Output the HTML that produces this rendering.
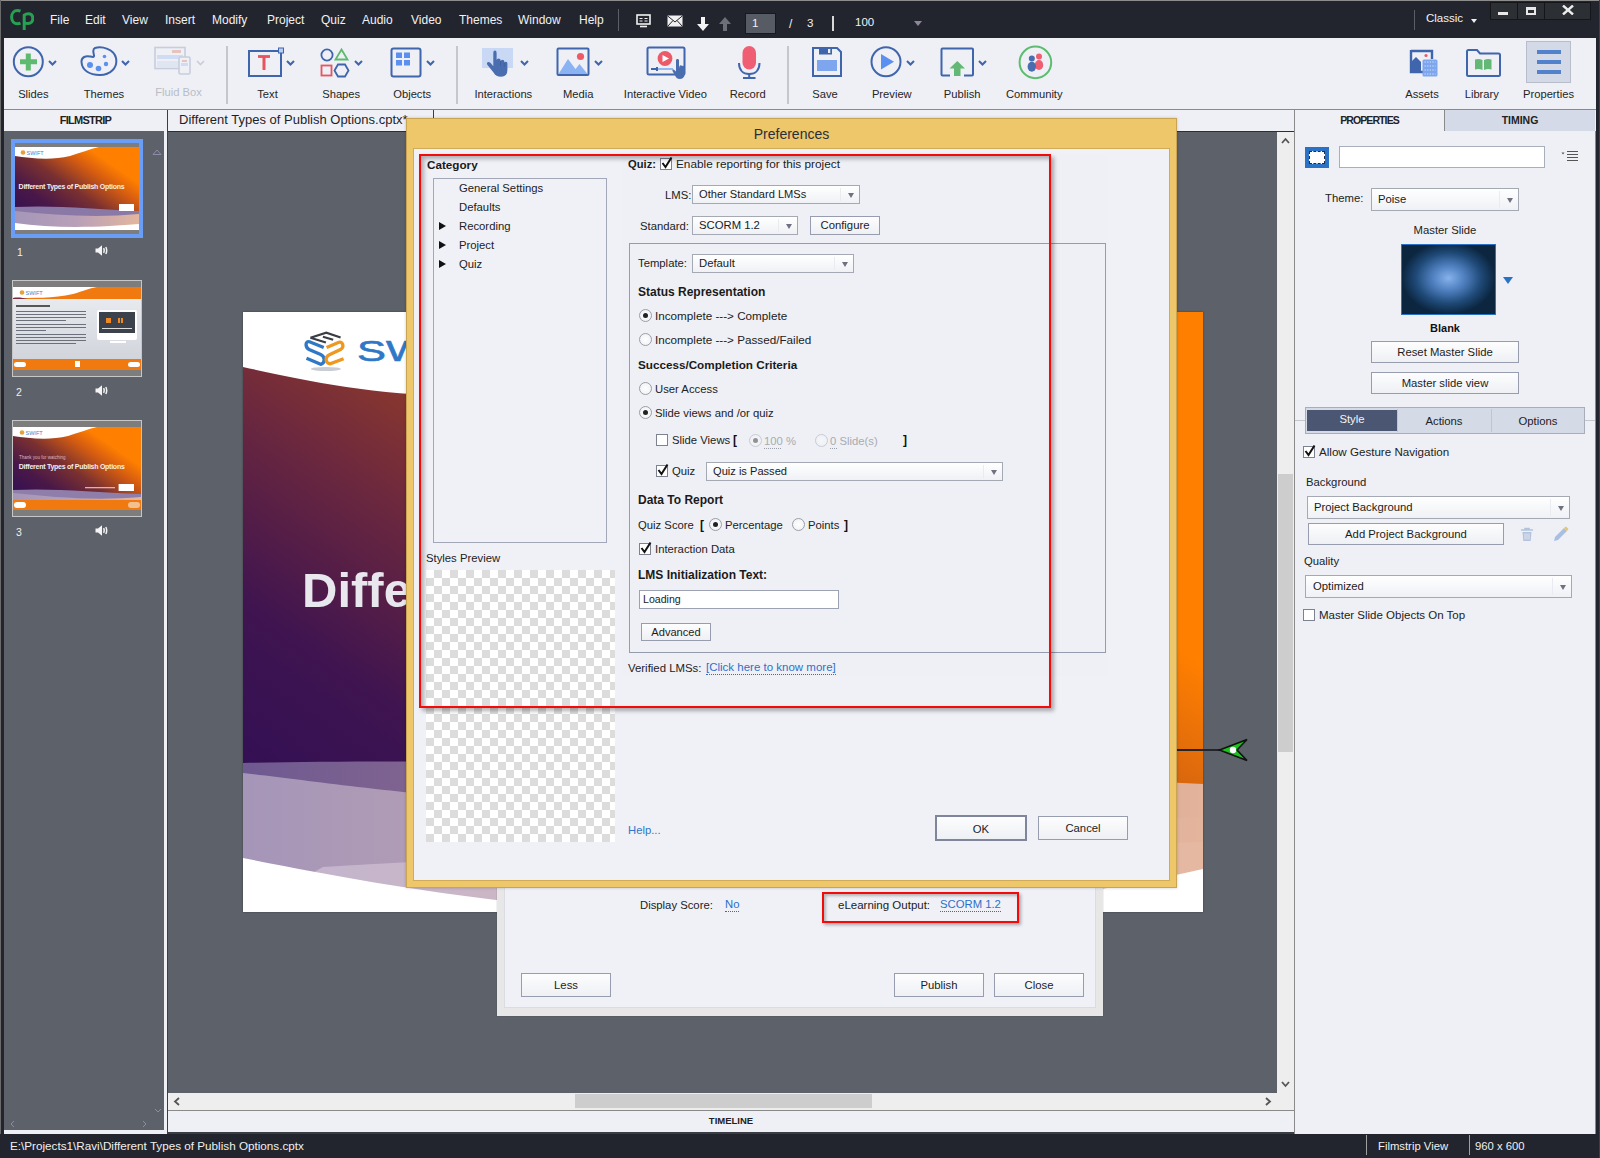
<!DOCTYPE html>
<html><head><meta charset="utf-8">
<style>
*{box-sizing:border-box;margin:0;padding:0}
html,body{width:1600px;height:1158px;overflow:hidden}
body{position:relative;background:#22252e;font-family:"Liberation Sans",sans-serif;font-size:12px;color:#1a1a1a}
.a{position:absolute}
.t{position:absolute;white-space:nowrap;line-height:1}
.mw{color:#f2f2f2;font-size:12px}
.tl{font-size:11.2px;text-align:center;line-height:14px}
.sep{position:absolute;width:1px;background:#c4c6cc}
.btn{position:absolute;background:linear-gradient(#fdfdfe,#eef0f4);border:1px solid #979cae;text-align:center;font-size:12px;color:#1c1c1c}
.dd{position:absolute;background:linear-gradient(#ffffff,#eff1f5);border:1px solid #a4a9b4}
.dd .arr{position:absolute;right:5px;top:50%;margin-top:-2px;width:0;height:0;border-left:3.5px solid transparent;border-right:3.5px solid transparent;border-top:5px solid #707080}
.cb{position:absolute;width:12px;height:12px;border:1px solid #7d8290;background:#fff}
.rd{position:absolute;width:13px;height:13px;border-radius:50%;border:1px solid #9a9ea8;background:radial-gradient(#fff,#eceef2)}
.rd.on:after{content:"";position:absolute;left:3px;top:3px;width:5px;height:5px;border-radius:50%;background:#222}
.b{font-weight:bold}
</style></head><body>
<!-- top light line -->
<div class="a" style="left:0;top:0;width:1600px;height:1px;background:#8d8d8d"></div>
<div class="a" style="left:0;top:0;width:1px;height:1158px;background:#6a6a6a"></div>

<!-- MENU BAR -->
<div id="menubar">
<svg class="a" style="left:10px;top:9px" width="24" height="22" viewBox="0 0 24 22"><path d="M10.5 2.2 C9.5 1.8 8.5 1.6 7.5 1.6 C4 1.6 1.6 4.3 1.6 8.2 C1.6 12.2 4 14.8 7.5 14.8 C8.6 14.8 9.6 14.6 10.5 14.2" fill="none" stroke="#27a052" stroke-width="3"/><path d="M14.2 21 V6.2 C15.6 5 17 4.7 18.4 4.7 C21.4 4.7 22.8 7 22.8 9.6 C22.8 12.6 20.8 14.6 18 14.6 C16.8 14.6 15.6 14.3 14.2 13.5" fill="none" stroke="#27a052" stroke-width="3"/></svg>
<div class="t mw" style="left:50px;top:14px">File</div>
<div class="t mw" style="left:85px;top:14px">Edit</div>
<div class="t mw" style="left:122px;top:14px">View</div>
<div class="t mw" style="left:165px;top:14px">Insert</div>
<div class="t mw" style="left:212px;top:14px">Modify</div>
<div class="t mw" style="left:267px;top:14px">Project</div>
<div class="t mw" style="left:321px;top:14px">Quiz</div>
<div class="t mw" style="left:362px;top:14px">Audio</div>
<div class="t mw" style="left:411px;top:14px">Video</div>
<div class="t mw" style="left:459px;top:14px">Themes</div>
<div class="t mw" style="left:518px;top:14px">Window</div>
<div class="t mw" style="left:579px;top:14px">Help</div>
<div class="a" style="left:618px;top:9px;width:1px;height:22px;background:#5a5e66"></div>
<svg class="a" style="left:636px;top:14px" width="15" height="14" viewBox="0 0 15 14"><rect x="1" y="1" width="13" height="9" fill="none" stroke="#f0f0f0" stroke-width="1.6"/><path d="M3.5 4.5h3M8.5 4.5h3M3.5 7h3M8.5 7h3" stroke="#f0f0f0" stroke-width="1.2"/><path d="M4 12.5h7" stroke="#f0f0f0" stroke-width="1.6"/></svg>
<svg class="a" style="left:667px;top:15px" width="16" height="12" viewBox="0 0 16 12"><rect x="0.5" y="0.5" width="15" height="11" fill="#f0f0f0"/><path d="M0.5 0.8 L8 7 L15.5 0.8 M0.5 11.5 L6 5.5 M15.5 11.5 L10 5.5" fill="none" stroke="#22252e" stroke-width="1"/></svg>
<svg class="a" style="left:697px;top:17px" width="12" height="14" viewBox="0 0 12 14"><path d="M4 0h4v7h4l-6 7l-6-7h4z" fill="#f4f4f4"/></svg>
<svg class="a" style="left:719px;top:17px" width="12" height="14" viewBox="0 0 12 14"><path d="M4 14h4v-7h4l-6-7l-6 7h4z" fill="#6b6f77"/></svg>
<div class="a" style="left:745px;top:13px;width:31px;height:21px;background:#565b64;border:1px solid #17191d"></div>
<div class="t mw" style="left:752px;top:18px;font-size:11.5px">1</div>
<div class="t mw" style="left:789px;top:18px;font-size:12px">/</div>
<div class="t mw" style="left:807px;top:18px;font-size:11.5px">3</div>
<div class="a" style="left:832px;top:16px;width:2px;height:15px;background:#d8d8d8"></div>
<div class="t mw" style="left:855px;top:17px;font-size:11.5px">100</div>
<div class="a" style="left:914px;top:21px;width:0;height:0;border-left:4px solid transparent;border-right:4px solid transparent;border-top:5px solid #8c8898"></div>
<div class="a" style="left:1414px;top:10px;width:1px;height:20px;background:#5a5e66"></div>
<div class="t mw" style="left:1426px;top:13px;font-size:11.5px">Classic</div>
<div class="a" style="left:1471px;top:19px;width:0;height:0;border-left:3px solid transparent;border-right:3px solid transparent;border-top:4px solid #f0f0f0"></div>
<div class="a" style="left:1490px;top:2px;width:101px;height:18px;background:#2c2f34;border:1px solid #14161a"></div>
<div class="a" style="left:1517px;top:2px;width:1px;height:18px;background:#14161a"></div>
<div class="a" style="left:1544px;top:2px;width:1px;height:18px;background:#14161a"></div>
<div class="a" style="left:1498px;top:12px;width:10px;height:3px;background:#e8e8e8"></div>
<div class="a" style="left:1526px;top:7px;width:10px;height:8px;border:2px solid #e8e8e8;border-top-width:3px"></div>
<svg class="a" style="left:1562px;top:5px" width="12" height="10" viewBox="0 0 12 10"><path d="M1 0.5 L11 9.5 M11 0.5 L1 9.5" stroke="#ececec" stroke-width="2.4"/></svg>
</div>

<!-- TOOLBAR -->
<div class="a" style="left:4px;top:38px;width:1592px;height:71px;background:#eff0f5"></div>
<div class="a" style="left:4px;top:109px;width:1592px;height:1px;background:#8a8a8a"></div>
<div id="toolbar">
<div class="a" style="left:226px;top:46px;width:2px;height:58px;background:#c5c7cd"></div>
<div class="a" style="left:456px;top:46px;width:2px;height:58px;background:#c5c7cd"></div>
<div class="a" style="left:787px;top:46px;width:2px;height:58px;background:#c5c7cd"></div>
<svg class="a" style="left:12px;top:46px" width="33" height="32" viewBox="0 0 33 32"><circle cx="16.3" cy="15.8" r="14.5" fill="none" stroke="#3f65ad" stroke-width="2"/><path d="M16.3 7.5v17M8 15.8h17" stroke="#5dba6f" stroke-width="5"/></svg>
<svg class="a" style="left:48px;top:60px" width="9" height="6" viewBox="0 0 9 6"><path d="M1 1 L4.5 4.5 L8 1" fill="none" stroke="#3f65ad" stroke-width="2"/></svg>
<svg class="a" style="left:80px;top:46px" width="38" height="31" viewBox="0 0 38 31"><path d="M14 9.5 C13.5 6 12 3 15 2 C22 0 34 3 36 12 C38 22 30 29 20 29 C9 29 2 24 1.5 16 C1.2 11 6 9.5 10 10.5 C12.5 11 14.3 11.5 14 9.5Z" fill="none" stroke="#3f65ad" stroke-width="2"/><circle cx="10" cy="19" r="3" fill="#5b8ff0"/><circle cx="18.5" cy="22.5" r="2.8" fill="#5b8ff0"/><circle cx="26" cy="18" r="2.2" fill="#5b8ff0"/><circle cx="24.5" cy="10.5" r="1.8" fill="#5b8ff0"/></svg>
<svg class="a" style="left:121px;top:60px" width="9" height="6" viewBox="0 0 9 6"><path d="M1 1 L4.5 4.5 L8 1" fill="none" stroke="#3f65ad" stroke-width="2"/></svg>
<svg class="a" style="left:154px;top:46px" width="38" height="30" viewBox="0 0 38 30"><rect x="1" y="1.5" width="30" height="21" fill="none" stroke="#c6cedd" stroke-width="1.6"/><rect x="18" y="4" width="9" height="3" fill="#e4c4bf"/><rect x="3" y="9" width="26" height="4" fill="#cfdcf4"/><rect x="3" y="15" width="26" height="6" fill="#e0e6f1"/><rect x="25" y="11" width="11" height="17" rx="1.5" fill="#eff0f5" stroke="#c6cedd" stroke-width="1.6"/><rect x="28" y="14" width="5" height="2" fill="#e4c4bf"/><rect x="27" y="17" width="7" height="3" fill="#cfdcf4"/></svg>
<svg class="a" style="left:196px;top:60px" width="9" height="6" viewBox="0 0 9 6"><path d="M1 1 L4.5 4.5 L8 1" fill="none" stroke="#c6cedd" stroke-width="1.6"/></svg>
<svg class="a" style="left:247px;top:47px" width="39" height="31" viewBox="0 0 39 31"><rect x="2" y="4" width="32" height="25" fill="none" stroke="#3f65ad" stroke-width="2"/><rect x="31.5" y="1" width="5" height="5" fill="#b9cff2" stroke="#3f65ad" stroke-width="1"/><path d="M11 9.5h12" stroke="#e9525f" stroke-width="2.8"/><path d="M17 9.5v13.5" stroke="#e9525f" stroke-width="3"/></svg>
<svg class="a" style="left:286px;top:60px" width="9" height="6" viewBox="0 0 9 6"><path d="M1 1 L4.5 4.5 L8 1" fill="none" stroke="#3f65ad" stroke-width="2"/></svg>
<svg class="a" style="left:320px;top:48px" width="30" height="30" viewBox="0 0 30 30"><circle cx="7" cy="7" r="5.6" fill="none" stroke="#3f65ad" stroke-width="1.8"/><path d="M21.5 1.5 L27.5 11.5 L15.5 11.5Z" fill="none" stroke="#5dba6f" stroke-width="1.8"/><rect x="1.5" y="17.5" width="10" height="10" fill="none" stroke="#e9525f" stroke-width="1.8"/><path d="M18 16.5h7l3.5 6l-3.5 6h-7l-3.5-6z" fill="none" stroke="#3f65ad" stroke-width="1.8"/></svg>
<svg class="a" style="left:354px;top:60px" width="9" height="6" viewBox="0 0 9 6"><path d="M1 1 L4.5 4.5 L8 1" fill="none" stroke="#3f65ad" stroke-width="2"/></svg>
<svg class="a" style="left:390px;top:47px" width="32" height="31" viewBox="0 0 32 31"><rect x="1.5" y="1.5" width="29" height="28" rx="2" fill="none" stroke="#3f65ad" stroke-width="2"/><rect x="6" y="5.5" width="6" height="5.5" fill="#5b8ff0"/><rect x="14" y="5.5" width="6" height="5.5" fill="#5b8ff0"/><rect x="6" y="13" width="6" height="5.5" fill="#5b8ff0"/><rect x="14" y="13" width="6" height="5.5" fill="#5b8ff0"/></svg>
<svg class="a" style="left:426px;top:60px" width="9" height="6" viewBox="0 0 9 6"><path d="M1 1 L4.5 4.5 L8 1" fill="none" stroke="#3f65ad" stroke-width="2"/></svg>
<svg class="a" style="left:481px;top:47px" width="33" height="32" viewBox="0 0 33 32"><rect x="1" y="1" width="31" height="20" fill="#c9d9f5"/><path d="M12.3 6 Q12.3 3.6 13.9 3.6 Q15.6 3.6 15.6 6 V13 Q15.8 11.4 17.5 11.4 Q19.4 11.4 19.6 13 V14.3 Q19.9 12.8 21.5 12.8 Q23.2 12.8 23.3 14.5 V15.8 Q23.6 14.8 24.9 14.8 Q26.4 14.8 26.4 16.6 V23 Q26.4 29.8 20 29.8 Q15 29.8 12.5 25.5 L6.3 17.8 Q5.3 15.6 7.3 15.1 Q8.8 14.8 10.3 16.8 L12.3 19.3Z" fill="#4a6db0"/><path d="M19.5 14v5M23.3 15.5v4" stroke="#3a5a98" stroke-width="0.6"/></svg>
<svg class="a" style="left:520px;top:60px" width="9" height="6" viewBox="0 0 9 6"><path d="M1 1 L4.5 4.5 L8 1" fill="none" stroke="#3f65ad" stroke-width="2"/></svg>
<svg class="a" style="left:556px;top:47px" width="34" height="30" viewBox="0 0 34 30"><rect x="1.5" y="1.5" width="31" height="26.5" rx="1" fill="none" stroke="#3f65ad" stroke-width="2"/><path d="M2.5 27 L12 12 L19.5 22 L23.5 17 L31.5 27Z" fill="#8bb2f2"/><circle cx="24.5" cy="9.5" r="3.6" fill="#ec5a6a"/></svg>
<svg class="a" style="left:594px;top:60px" width="9" height="6" viewBox="0 0 9 6"><path d="M1 1 L4.5 4.5 L8 1" fill="none" stroke="#3f65ad" stroke-width="2"/></svg>
<svg class="a" style="left:646px;top:46px" width="43" height="34" viewBox="0 0 43 34"><rect x="1.5" y="1.5" width="37" height="27" rx="1.5" fill="none" stroke="#3f65ad" stroke-width="2"/><circle cx="19" cy="12.5" r="7.4" fill="#ec5a6a"/><path d="M16.5 9 L23 12.5 L16.5 16Z" fill="#fff"/><path d="M5 23h22" stroke="#8bb2f2" stroke-width="1.8"/><path d="M5 23h6" stroke="#3f65ad" stroke-width="2"/><rect x="10" y="21" width="2" height="4" fill="#3f65ad"/><path d="M31.5 13 C32.5 13 33 13.6 33 14.5 V22 L33.5 20 C34 19 35.5 19 36 20 C36.5 19.5 38 19.6 38.3 20.6 L39 26 C39 30 37.5 33 34 33 C31 33 30 31.5 28.5 28.5 L26.5 25 C26 24 27.3 23 28.2 24 L30 25.5 V14.5 C30 13.6 30.5 13 31.5 13Z" fill="#4a6db0"/></svg>
<svg class="a" style="left:737px;top:45px" width="24" height="34" viewBox="0 0 24 34"><rect x="5.5" y="1" width="13.5" height="23.5" rx="6.75" fill="#f05e73"/><path d="M2 18 C2 25 6 29 12.2 29 C18.5 29 22.5 25 22.5 18" fill="none" stroke="#3f65ad" stroke-width="2"/><path d="M12.2 29v4.5M6 33h12.5" stroke="#3f65ad" stroke-width="2"/></svg>
<svg class="a" style="left:811px;top:46px" width="32" height="32" viewBox="0 0 32 32"><path d="M2 2 H26 L30 6 V30 H2Z" fill="none" stroke="#3f65ad" stroke-width="2"/><rect x="8" y="2" width="13" height="6.5" fill="#3f65ad"/><rect x="17" y="3" width="2.3" height="4" fill="#eff0f5"/><rect x="6" y="14" width="20" height="11" fill="#7ea6ee"/></svg>
<svg class="a" style="left:870px;top:46px" width="33" height="32" viewBox="0 0 33 32"><circle cx="16" cy="15.8" r="14.5" fill="none" stroke="#3f65ad" stroke-width="2"/><path d="M11 8 L24 15.8 L11 23.5Z" fill="#5b8ff0"/></svg>
<svg class="a" style="left:906px;top:60px" width="9" height="6" viewBox="0 0 9 6"><path d="M1 1 L4.5 4.5 L8 1" fill="none" stroke="#3f65ad" stroke-width="2"/></svg>
<svg class="a" style="left:940px;top:47px" width="36" height="30" viewBox="0 0 36 30"><path d="M10 28.5 H2.5 Q1.5 28.5 1.5 27.5 V2.5 Q1.5 1.5 2.5 1.5 H32 Q33 1.5 33 2.5 V27.5 Q33 28.5 32 28.5 H24" fill="none" stroke="#3f65ad" stroke-width="2"/><path d="M17.3 14 L25 21.5 H20.5 V29 H14 V21.5 H9.5Z" fill="#62b874"/></svg>
<svg class="a" style="left:978px;top:60px" width="9" height="6" viewBox="0 0 9 6"><path d="M1 1 L4.5 4.5 L8 1" fill="none" stroke="#3f65ad" stroke-width="2"/></svg>
<svg class="a" style="left:1018px;top:45px" width="35" height="35" viewBox="0 0 35 35"><circle cx="17.4" cy="17.4" r="15.8" fill="none" stroke="#5cbd70" stroke-width="2"/><circle cx="21" cy="11.5" r="3" fill="#f05e73"/><ellipse cx="21" cy="20" rx="4.2" ry="5" fill="#f05e73"/><circle cx="13.8" cy="13.6" r="3" fill="#4a6db0"/><ellipse cx="13.8" cy="21.8" rx="4.2" ry="5" fill="#4a6db0"/></svg>
<svg class="a" style="left:1409px;top:49px" width="31" height="29" viewBox="0 0 31 29"><path d="M2 2h21v8" fill="none" stroke="#3f65ad" stroke-width="2.4"/><path d="M2 1v22h12" fill="none" stroke="#3f65ad" stroke-width="2.4"/><path d="M2 23 V13 L7 8 L12 13 V23Z" fill="#3f65ad"/><circle cx="17" cy="6.5" r="1.6" fill="#ec5a6a"/><rect x="13.5" y="10.5" width="15" height="17" rx="1.5" fill="#7ea6ee"/><path d="M15.5 13h11M15.5 17h11M15.5 21h11M15.5 25h11" stroke="#d0e0fa" stroke-width="1" stroke-dasharray="1.3 1.3"/></svg>
<svg class="a" style="left:1465px;top:49px" width="37" height="28" viewBox="0 0 37 28"><path d="M2 2.5 Q2 1 3.5 1 H12 L15 4.5 H33.5 Q35 4.5 35 6 V25.5 Q35 27 33.5 27 H3.5 Q2 27 2 25.5Z" fill="none" stroke="#3f65ad" stroke-width="2"/><path d="M10 10.5 Q14 9.5 17.5 11 V21 Q14 19.5 10 20.5Z M19 11 Q22.5 9.5 26.5 10.5 V20.5 Q22.5 19.5 19 21Z" fill="#62b874"/></svg>
<div class="a" style="left:1526px;top:41px;width:45px;height:42px;background:#d4d9e7;border:1px solid #b9bdc9"></div>
<div class="a" style="left:1537px;top:50px;width:24px;height:4px;background:#5382cc"></div><div class="a" style="left:1537px;top:60px;width:24px;height:4px;background:#5382cc"></div><div class="a" style="left:1537px;top:70px;width:24px;height:4px;background:#5382cc"></div>
<div class="t tl" style="left:-26.6px;top:87px;width:120px;color:#252525">Slides</div>
<div class="t tl" style="left:44.0px;top:87px;width:120px;color:#252525">Themes</div>
<div class="t tl" style="left:118.5px;top:85px;width:120px;color:#b9bdc7">Fluid Box</div>
<div class="t tl" style="left:207.5px;top:87px;width:120px;color:#252525">Text</div>
<div class="t tl" style="left:281.2px;top:87px;width:120px;color:#252525">Shapes</div>
<div class="t tl" style="left:352.2px;top:87px;width:120px;color:#252525">Objects</div>
<div class="t tl" style="left:443.3px;top:87px;width:120px;color:#252525">Interactions</div>
<div class="t tl" style="left:518.2px;top:87px;width:120px;color:#252525">Media</div>
<div class="t tl" style="left:605.4px;top:87px;width:120px;color:#252525">Interactive Video</div>
<div class="t tl" style="left:687.7px;top:87px;width:120px;color:#252525">Record</div>
<div class="t tl" style="left:765.1px;top:87px;width:120px;color:#252525">Save</div>
<div class="t tl" style="left:831.8px;top:87px;width:120px;color:#252525">Preview</div>
<div class="t tl" style="left:902.2px;top:87px;width:120px;color:#252525">Publish</div>
<div class="t tl" style="left:974.3px;top:87px;width:120px;color:#252525">Community</div>
<div class="t tl" style="left:1362.0px;top:87px;width:120px;color:#252525">Assets</div>
<div class="t tl" style="left:1421.8px;top:87px;width:120px;color:#252525">Library</div>
<div class="t tl" style="left:1488.5px;top:87px;width:120px;color:#252525">Properties</div>
</div>

<!-- PANEL HEADERS -->
<div class="a" style="left:4px;top:110px;width:1592px;height:21px;background:#eff0f5"></div>

<div class="t b" style="left:4px;top:113px;width:163px;text-align:center;font-size:11px;letter-spacing:-0.75px;line-height:14px;color:#222">FILMSTRIP</div>
<div class="t" style="left:179px;top:113px;font-size:13px;line-height:14px;color:#1e1e28">Different Types of Publish Options.cptx*</div>
<div class="t" style="left:421px;top:114px;font-size:12px;line-height:14px;color:#222">x</div>
<div class="a" style="left:433px;top:110px;width:1px;height:21px;background:#3a3d44"></div>
<div class="a" style="left:1444px;top:110px;width:1px;height:21px;background:#8a8a8a"></div>
<div class="a" style="left:1445px;top:110px;width:150px;height:21px;background:#d5dae8"></div>
<div class="t b" style="left:1295px;top:113px;width:149px;text-align:center;font-size:10.5px;letter-spacing:-0.9px;line-height:14px;color:#222">PROPERTIES</div>
<div class="t b" style="left:1445px;top:113px;width:150px;text-align:center;font-size:10.5px;line-height:14px;color:#222">TIMING</div>
<div class="a" style="left:1295px;top:131px;width:301px;height:1px;background:#3a3d44"></div>
<div class="a" style="left:4px;top:131px;width:163px;height:1px;background:#3a3d44"></div>
<!-- FILMSTRIP -->
<div class="a" style="left:4px;top:131px;width:160px;height:999px;background:#5d6169"></div>
<div class="a" style="left:4px;top:1130px;width:164px;height:4px;background:#eff0f5"></div>
<div class="a" style="left:164px;top:131px;width:4px;height:1003px;background:#eff0f5"></div>
<div class="a" style="left:167px;top:110px;width:1px;height:1024px;background:#3a3d44"></div>

<!-- FILMSTRIP THUMBS -->
<div class="a" style="left:11px;top:139px;width:132px;height:99px;background:#6a9df5"></div>
<div class="a" style="left:15px;top:143px;width:124px;height:91px;background:#7d7d7d"></div>
<svg class="a" style="left:15px;top:147px" width="124" height="83" viewBox="0 0 124 83"><defs><linearGradient id="tg1" gradientUnits="userSpaceOnUse" x1="0" y1="78" x2="60" y2="-8"><stop offset="0" stop-color="#2b0d57"/><stop offset="0.35" stop-color="#4a1848"/><stop offset="0.6" stop-color="#7a3030"/><stop offset="0.85" stop-color="#d85e10"/><stop offset="1" stop-color="#ff7f00"/></linearGradient>
<linearGradient id="tw1" x1="0" y1="0" x2="1" y2="0"><stop offset="0" stop-color="#a596b8"/><stop offset="0.5" stop-color="#b9a0b8"/><stop offset="1" stop-color="#e3b69e"/></linearGradient></defs>
<rect width="124" height="83" fill="#fff"/>
<path d="M0 9 C15 11 35 14 55 9 C65 6 75 2 84 0 L124 0 L124 83 L0 83Z" fill="url(#tg1)"/>
<path d="M0 60 C40 58 80 62 124 64 L124 83 L0 83Z" fill="#8a78a6"/>
<path d="M0 64 C40 68 80 71 124 67 L124 83 L0 83Z" fill="url(#tw1)"/>
<path d="M0 76 C40 82 90 80 124 77 L124 83 L0 83Z" fill="#fff"/>
<rect x="104" y="57" width="15" height="7" fill="#fff"/>
<text x="3.6" y="41.5" font-family="Liberation Sans" font-weight="bold" font-size="7" fill="#f2eef2" textLength="106">Different Types of Publish Options</text>
<circle cx="8" cy="5.5" r="2.3" fill="#e7a03a"/><text x="11.5" y="8" font-family="Liberation Sans" font-size="5.5" fill="#4a80cc">SWIFT</text>
</svg>
<div class="t" style="left:17px;top:245px;font-size:10.5px;line-height:14px;color:#f0f0f0">1</div>
<svg class="a" style="left:95px;top:245px" width="13" height="11" viewBox="0 0 13 11"><path d="M0.5 3.5h2.5l4-3.2v10.4l-4-3.2H0.5z" fill="#f4f4f4"/><path d="M8.6 3.2 Q9.8 5.5 8.6 7.8 M10.8 2 Q12.6 5.5 10.8 9" fill="none" stroke="#f4f4f4" stroke-width="1.5"/></svg>
<div class="a" style="left:12px;top:280px;width:130px;height:97px;background:#7d7d7d;border:1px solid #c6c6c6"></div>
<svg class="a" style="left:13px;top:287px" width="128" height="83" viewBox="0 0 128 83"><defs><linearGradient id="cg2" x1="0" y1="0" x2="0" y2="1"><stop offset="0" stop-color="#eceef2"/><stop offset="1" stop-color="#cdd1d8"/></linearGradient></defs>
<rect width="128" height="83" fill="url(#cg2)"/>
<path d="M0 0 H128 V12 H0Z" fill="#fff"/>
<path d="M0 12 C20 10 40 12 60 7 C70 4 78 1 84 0 H128 V12Z" fill="#f07a10"/>
<path d="M0 11 C5 10 10 11 15 12 H0Z" fill="#7a2a3a"/>
<circle cx="9" cy="5.5" r="2.3" fill="#e7a03a"/><text x="12.5" y="8" font-family="Liberation Sans" font-size="5.5" fill="#4a80cc">SWIFT</text>
<rect x="3" y="18" width="34" height="2" fill="#555"/>
<g fill="#6c707a"><rect x="3" y="24" width="70" height="1"/><rect x="3" y="27" width="70" height="1"/><rect x="3" y="30" width="70" height="1"/><rect x="3" y="33" width="50" height="1"/><rect x="3" y="37" width="70" height="1"/><rect x="3" y="40" width="70" height="1"/><rect x="3" y="43" width="30" height="1"/><rect x="3" y="47" width="70" height="1"/><rect x="3" y="50" width="70" height="1"/><rect x="3" y="53" width="70" height="1"/><rect x="3" y="56" width="60" height="1"/></g>
<rect x="84" y="23" width="40" height="30" rx="2" fill="#fff"/><rect x="86" y="25" width="36" height="21" fill="#3c424c"/><rect x="97" y="54" width="16" height="2" fill="#fff"/>
<rect x="93" y="31" width="5" height="5" fill="#f08a20"/><rect x="105" y="31" width="2" height="5" fill="#f08a20"/><rect x="108" y="31" width="2" height="5" fill="#f08a20"/><rect x="89" y="41" width="30" height="1" fill="#ddd"/>
<rect x="0" y="72" width="128" height="11" fill="#f07a10"/>
<rect x="1" y="75" width="12" height="5" rx="2.5" fill="#fff"/><rect x="115" y="75" width="12" height="5" rx="2.5" fill="#fff"/><rect x="62" y="74" width="5" height="6" fill="#fff"/>
</svg>
<div class="t" style="left:16px;top:385px;font-size:10.5px;line-height:14px;color:#f0f0f0">2</div>
<svg class="a" style="left:95px;top:385px" width="13" height="11" viewBox="0 0 13 11"><path d="M0.5 3.5h2.5l4-3.2v10.4l-4-3.2H0.5z" fill="#f4f4f4"/><path d="M8.6 3.2 Q9.8 5.5 8.6 7.8 M10.8 2 Q12.6 5.5 10.8 9" fill="none" stroke="#f4f4f4" stroke-width="1.5"/></svg>
<div class="a" style="left:12px;top:420px;width:130px;height:97px;background:#7d7d7d;border:1px solid #c6c6c6"></div>
<svg class="a" style="left:13px;top:427px" width="128" height="83" viewBox="0 0 128 83"><defs><linearGradient id="tg3" gradientUnits="userSpaceOnUse" x1="0" y1="78" x2="60" y2="-8"><stop offset="0" stop-color="#2b0d57"/><stop offset="0.35" stop-color="#4a1848"/><stop offset="0.6" stop-color="#7a3030"/><stop offset="0.85" stop-color="#d85e10"/><stop offset="1" stop-color="#ff7f00"/></linearGradient>
<linearGradient id="tw3" x1="0" y1="0" x2="1" y2="0"><stop offset="0" stop-color="#a596b8"/><stop offset="0.5" stop-color="#b9a0b8"/><stop offset="1" stop-color="#e3b69e"/></linearGradient></defs>
<rect width="128" height="83" fill="#fff"/>
<path d="M0 9 C15 11 35 14 55 9 C65 6 75 2 84 0 L128 0 L128 83 L0 83Z" fill="url(#tg3)"/>
<path d="M0 63 C40 61 80 65 128 67 L128 83 L0 83Z" fill="#8f7eaa"/>
<path d="M0 66 C40 70 80 74 128 70 L128 83 L0 83Z" fill="url(#tw3)"/>
<rect x="105.6" y="57" width="15.4" height="7" fill="#fff"/>
<rect x="72" y="60" width="30" height="1.3" fill="#d8b0c0"/>
<text x="6" y="32" font-family="Liberation Sans" font-size="4.5" fill="#d8b8c8">Thank you for watching</text>
<text x="5.8" y="42" font-family="Liberation Sans" font-weight="bold" font-size="7" fill="#f2eef2" textLength="106">Different Types of Publish Options</text>
<circle cx="9" cy="5.5" r="2.3" fill="#e7a03a"/><text x="12.5" y="8" font-family="Liberation Sans" font-size="5.5" fill="#4a80cc">SWIFT</text>
<rect x="0" y="73" width="128" height="10" fill="#f07a10"/>
<rect x="1" y="75" width="12" height="6" rx="3" fill="#fff"/><rect x="115" y="75" width="12" height="6" rx="3" fill="#f4c090"/>
</svg>
<div class="t" style="left:16px;top:525px;font-size:10.5px;line-height:14px;color:#f0f0f0">3</div>
<svg class="a" style="left:95px;top:525px" width="13" height="11" viewBox="0 0 13 11"><path d="M0.5 3.5h2.5l4-3.2v10.4l-4-3.2H0.5z" fill="#f4f4f4"/><path d="M8.6 3.2 Q9.8 5.5 8.6 7.8 M10.8 2 Q12.6 5.5 10.8 9" fill="none" stroke="#f4f4f4" stroke-width="1.5"/></svg>
<svg class="a" style="left:152px;top:149px" width="10" height="6" viewBox="0 0 10 6"><path d="M1 5.5 L5 1 L9 5.5Z" fill="none" stroke="#8f8aa8" stroke-width="1"/></svg>
<svg class="a" style="left:154px;top:1108px" width="8" height="5" viewBox="0 0 8 5"><path d="M1 1 L4 4 L7 1" fill="none" stroke="#8a8ea0" stroke-width="1"/></svg>
<svg class="a" style="left:10px;top:1120px" width="5" height="8" viewBox="0 0 5 8"><path d="M4 1 L1 4 L4 7" fill="none" stroke="#8a8ea0" stroke-width="1"/></svg>
<svg class="a" style="left:142px;top:1120px" width="5" height="8" viewBox="0 0 5 8"><path d="M1 1 L4 4 L1 7" fill="none" stroke="#8a8ea0" stroke-width="1"/></svg>
<!-- STAGE -->
<div class="a" style="left:168px;top:131px;width:1109px;height:962px;background:#5d6169"></div>
<div class="a" style="left:168px;top:131px;width:1126px;height:1px;background:#2b2e35"></div>
<div class="a" style="left:1277px;top:132px;width:17px;height:978px;background:#eeeeee"></div>
<div class="a" style="left:168px;top:1093px;width:1126px;height:17px;background:#eeeeee"></div>
<div class="a" style="left:168px;top:1110px;width:1126px;height:1px;background:#8a8a8a"></div>
<div class="a" style="left:168px;top:1111px;width:1126px;height:21px;background:#eff0f5"></div>
<div class="a" style="left:168px;top:1132px;width:1126px;height:2px;background:#3a3d44"></div>
<div class="a" style="left:1294px;top:110px;width:1px;height:1024px;background:#8a8a8a"></div>

<div class="a" style="left:1278px;top:474px;width:15px;height:278px;background:#cdcdcd"></div>
<div class="a" style="left:575px;top:1094px;width:297px;height:14px;background:#cdcdcd"></div>
<svg class="a" style="left:1281px;top:137px" width="9" height="7" viewBox="0 0 9 7"><path d="M1 6 L4.5 2 L8 6" fill="none" stroke="#555" stroke-width="1.8"/></svg>
<svg class="a" style="left:1281px;top:1081px" width="9" height="7" viewBox="0 0 9 7"><path d="M1 1 L4.5 5 L8 1" fill="none" stroke="#555" stroke-width="1.8"/></svg>
<svg class="a" style="left:173px;top:1097px" width="7" height="9" viewBox="0 0 7 9"><path d="M6 1 L2 4.5 L6 8" fill="none" stroke="#555" stroke-width="1.8"/></svg>
<svg class="a" style="left:1265px;top:1097px" width="7" height="9" viewBox="0 0 7 9"><path d="M1 1 L5 4.5 L1 8" fill="none" stroke="#555" stroke-width="1.8"/></svg>
<!-- SLIDE -->
<div class="a" style="left:243px;top:312px;width:960px;height:600px;overflow:hidden;box-shadow:0 0 2px rgba(0,0,0,.35)">
<svg width="960" height="600" viewBox="0 0 960 600" style="display:block">
<defs>
<linearGradient id="mg" gradientUnits="userSpaceOnUse" x1="0" y1="564" x2="423" y2="-57">
<stop offset="0" stop-color="#2b0d57"/><stop offset="0.3" stop-color="#3f1450"/><stop offset="0.52" stop-color="#6c283e"/><stop offset="0.68" stop-color="#8e3a2c"/><stop offset="0.8" stop-color="#d8660f"/><stop offset="0.95" stop-color="#ff7f00"/>
</linearGradient>
<linearGradient id="w1" x1="0" y1="0" x2="1" y2="0"><stop offset="0" stop-color="#6e5990"/><stop offset="0.5" stop-color="#a07890"/><stop offset="1" stop-color="#e4b39a"/></linearGradient>
<linearGradient id="w2" x1="0" y1="0" x2="1" y2="0"><stop offset="0" stop-color="#a595b8"/><stop offset="0.5" stop-color="#c4a8b0"/><stop offset="1" stop-color="#e4b49c"/></linearGradient>
<linearGradient id="w3" x1="0" y1="0" x2="1" y2="0"><stop offset="0" stop-color="#c1b5d1"/><stop offset="1" stop-color="#e6b8a2"/></linearGradient>
</defs>
<rect width="960" height="600" fill="#fff"/>
<path d="M0 55 C90 75 230 105 380 60 C440 40 500 15 540 0 L960 0 L960 600 L0 600Z" fill="url(#mg)"/>
<path d="M0 451 C250 446 600 455 960 472 L960 600 L0 600Z" fill="url(#w1)"/>
<path d="M0 461 C80 470 180 486 400 500 C600 510 800 510 960 505 L960 600 L0 600Z" fill="url(#w2)"/>
<path d="M80 555 C300 540 650 540 960 530 L960 600 L0 600Z" fill="url(#w3)"/>
<path d="M0 546 C100 566 200 584 330 596 L640 600 C800 590 880 575 960 557 L960 600 L0 600Z" fill="#fff"/>
<g fill="none" stroke-linecap="butt">
<path d="M67.4 25.7 L83.3 20.6 L97.6 25.5 M79.9 24.7 L90.2 27.7 M67.4 25.7 L82.9 30.5" stroke="#3a3d44" stroke-width="2.2"/>
<path d="M80.75 35.45 L66.5 29.8 C62.5 28.4 61.5 35 66.1 37.6 L77.7 42.4 C82.3 44.5 82.3 51 77.7 52.3 L63.5 46.2" stroke="#2f78c8" stroke-width="3.3"/>
<path d="M83.6 35.5 L95.9 30.3 C100 29 101.3 35.2 98 37.2 L86.4 42.8 C81.8 45 82 50.8 87.2 51.9 L100.6 46.7" stroke="#f0981e" stroke-width="3.3"/>
</g>
<ellipse cx="82.9" cy="57" rx="15" ry="2" fill="#c9ccd2"/>
<text x="114" y="49" font-family="Liberation Sans" font-size="29" fill="#2f78c8" stroke="#2f78c8" stroke-width="0.6" textLength="135" lengthAdjust="spacingAndGlyphs">SWIFT</text>
<text x="59" y="295" font-family="Liberation Sans" font-weight="bold" font-size="49" fill="#e9e7ee">Different Types</text>
</svg>
</div>
<div class="a" style="left:1177px;top:749px;width:44px;height:2px;background:#22252b"></div>
<svg class="a" style="left:1217px;top:738px" width="32" height="24" viewBox="0 0 32 24"><path d="M2.5 12 L30 1.5 L20 12 L30 22.5Z" fill="#19c31b" stroke="#111" stroke-width="1.6" stroke-linejoin="miter"/><circle cx="16" cy="12" r="3.2" fill="#fff"/></svg>
<!-- PUBLISH DIALOG -->
<div class="a" style="left:497px;top:870px;width:606px;height:146px;background:#e7e7e7;box-shadow:0 0 1px rgba(0,0,0,.3)"></div>
<div class="a" style="left:504px;top:870px;width:592px;height:138px;background:#eff1f7;border:1px solid #dadce2"></div>
<div class="t" style="left:640px;top:898px;font-size:11.3px;line-height:14px;color:#222">Display Score:</div>
<div class="t" style="left:725px;top:898px;font-size:11.3px;line-height:14px;color:#2b6fc9;border-bottom:1px dotted #2b6fc9;line-height:13px">No</div>
<div class="t" style="left:838px;top:898px;font-size:11.5px;line-height:14px;color:#222">eLearning Output:</div>
<div class="t" style="left:940px;top:898px;font-size:11.3px;line-height:14px;color:#2b6fc9;border-bottom:1px dotted #2b6fc9;line-height:13px">SCORM 1.2</div>
<div class="a" style="left:822px;top:892px;width:197px;height:31px;border:2px solid #f50a0a;box-shadow:2px 2px 3px rgba(0,0,0,.3), inset 2px 2px 3px rgba(0,0,0,.25)"></div>
<div class="btn" style="left:521px;top:973px;width:90px;height:24px;line-height:22px;font-size:11.3px;">Less</div>
<div class="btn" style="left:894px;top:973px;width:90px;height:24px;line-height:22px;font-size:11.3px;">Publish</div>
<div class="btn" style="left:994px;top:973px;width:90px;height:24px;line-height:22px;font-size:11.3px;">Close</div>
<!-- PREFERENCES DIALOG -->
<div class="a" style="left:406px;top:118px;width:771px;height:770px;background:#eec76b;border:1px solid #c9a453;box-shadow:0 0 3px rgba(0,0,0,.2)"></div>
<div class="a" style="left:413px;top:148px;width:757px;height:733px;background:#eff1f7;border:1px solid #d2ab58"></div>
<div class="t" style="left:406px;top:126.5px;width:771px;text-align:center;font-size:14px;line-height:14px;color:#2a2e3a">Preferences</div>
<div class="a" style="left:622px;top:155px;width:486px;height:521px;background:#eef0f6"></div>
<div class="t b" style="left:427px;top:158px;font-size:11.7px;line-height:14px;color:#1a1a1a">Category</div>
<div class="a" style="left:433px;top:178px;width:174px;height:365px;border:1px solid #a2a8b8;background:#eff1f7"></div>
<div class="t" style="left:459px;top:181px;font-size:11.3px;line-height:14px;color:#222">General Settings</div>
<div class="t" style="left:459px;top:200px;font-size:11.3px;line-height:14px;color:#222">Defaults</div>
<div class="t" style="left:459px;top:219px;font-size:11.3px;line-height:14px;color:#222">Recording</div>
<div class="a" style="left:439px;top:222px;width:0;height:0;border-top:4px solid transparent;border-bottom:4px solid transparent;border-left:7px solid #111"></div>
<div class="t" style="left:459px;top:238px;font-size:11.3px;line-height:14px;color:#222">Project</div>
<div class="a" style="left:439px;top:241px;width:0;height:0;border-top:4px solid transparent;border-bottom:4px solid transparent;border-left:7px solid #111"></div>
<div class="t" style="left:459px;top:257px;font-size:11.3px;line-height:14px;color:#222">Quiz</div>
<div class="a" style="left:439px;top:260px;width:0;height:0;border-top:4px solid transparent;border-bottom:4px solid transparent;border-left:7px solid #111"></div>
<div class="t" style="left:426px;top:551px;font-size:11.3px;line-height:14px;color:#222">Styles Preview</div>
<div class="a" style="left:426px;top:570px;width:189px;height:272px;background-color:#dcdcdc;background-image:linear-gradient(45deg,#fff 25%,transparent 25%,transparent 75%,#fff 75%),linear-gradient(45deg,#fff 25%,transparent 25%,transparent 75%,#fff 75%);background-size:16px 16px;background-position:8px 0,0 8px"></div>
<div class="t b" style="left:628px;top:157px;font-size:11.2px;line-height:14px;color:#1a1a1a">Quiz:</div>
<div class="cb" style="left:660px;top:158px"></div><svg class="a" style="left:661px;top:156px" width="12" height="13" viewBox="0 0 12 13"><path d="M1.5 7 L4.5 11 L10.5 1.5" fill="none" stroke="#111" stroke-width="2"/></svg>
<div class="t" style="left:676px;top:157px;font-size:11.8px;line-height:14px;color:#222">Enable reporting for this project</div>
<div class="t" style="left:665px;top:188px;font-size:11.3px;line-height:14px;color:#222">LMS:</div>
<div class="dd" style="left:692px;top:185px;width:168px;height:19px"><div class="t" style="left:6px;top:0.5px;font-size:11.1px;line-height:14px">Other Standard LMSs</div><div class="a" style="right:18px;top:2px;bottom:2px;width:1px;background:#e9ebf0"></div><div class="arr"></div></div>
<div class="t" style="left:640px;top:219px;font-size:11.3px;line-height:14px;color:#222">Standard:</div>
<div class="dd" style="left:692px;top:216px;width:106px;height:19px"><div class="t" style="left:6px;top:0.5px;font-size:11.3px;line-height:14px">SCORM 1.2</div><div class="a" style="right:18px;top:2px;bottom:2px;width:1px;background:#e9ebf0"></div><div class="arr"></div></div>
<div class="btn" style="left:810px;top:216px;width:70px;height:19px;line-height:17px;font-size:11.3px;">Configure</div>
<div class="a" style="left:629px;top:243px;width:477px;height:410px;border:1px solid #959cae"></div>
<div class="t" style="left:638px;top:256px;font-size:11.3px;line-height:14px;color:#222">Template:</div>
<div class="dd" style="left:692px;top:254px;width:162px;height:19px"><div class="t" style="left:6px;top:0.5px;font-size:11.3px;line-height:14px">Default</div><div class="a" style="right:18px;top:2px;bottom:2px;width:1px;background:#e9ebf0"></div><div class="arr"></div></div>
<div class="t b" style="left:638px;top:285px;font-size:12px;line-height:14px;color:#1a1a1a">Status Representation</div>
<div class="rd on" style="left:639px;top:309px;"></div>
<div class="t" style="left:655px;top:309px;font-size:11.7px;line-height:14px;color:#222">Incomplete ---&gt; Complete</div>
<div class="rd" style="left:639px;top:333px;"></div>
<div class="t" style="left:655px;top:333px;font-size:11.7px;line-height:14px;color:#222">Incomplete ---&gt; Passed/Failed</div>
<div class="t b" style="left:638px;top:358px;font-size:11.7px;line-height:14px;color:#1a1a1a">Success/Completion Criteria</div>
<div class="rd" style="left:639px;top:382px;"></div>
<div class="t" style="left:655px;top:382px;font-size:11.3px;line-height:14px;color:#222">User Access</div>
<div class="rd on" style="left:639px;top:406px;"></div>
<div class="t" style="left:655px;top:406px;font-size:11.3px;line-height:14px;color:#222">Slide views and /or quiz</div>
<div class="cb" style="left:656px;top:434px"></div>
<div class="t" style="left:672px;top:433px;font-size:11.3px;line-height:14px;color:#222">Slide Views</div>
<div class="t" style="left:733px;top:433px;font-size:12px;line-height:14px;color:#111;font-weight:bold">[</div>
<div class="rd on" style="left:749px;top:434px;opacity:.45;"></div>
<div class="t" style="left:764px;top:434px;font-size:11.3px;line-height:14px;color:#a9abb0">100 %</div>
<div class="a" style="left:764px;top:448px;width:17px;border-top:1px dotted #9aa0aa"></div>
<div class="rd" style="left:815px;top:434px;opacity:.45;"></div>
<div class="t" style="left:830px;top:434px;font-size:11.3px;line-height:14px;color:#a9abb0">0 Slide(s)</div>
<div class="a" style="left:830px;top:448px;width:7px;border-top:1px dotted #9aa0aa"></div>
<div class="t" style="left:903px;top:433px;font-size:12px;line-height:14px;color:#111;font-weight:bold">]</div>
<div class="cb" style="left:656px;top:465px"></div><svg class="a" style="left:657px;top:463px" width="12" height="13" viewBox="0 0 12 13"><path d="M1.5 7 L4.5 11 L10.5 1.5" fill="none" stroke="#111" stroke-width="2"/></svg>
<div class="t" style="left:672px;top:464px;font-size:11.3px;line-height:14px;color:#222">Quiz</div>
<div class="dd" style="left:706px;top:462px;width:297px;height:19px"><div class="t" style="left:6px;top:0.5px;font-size:11.1px;line-height:14px">Quiz is Passed</div><div class="a" style="right:18px;top:2px;bottom:2px;width:1px;background:#e9ebf0"></div><div class="arr"></div></div>
<div class="t b" style="left:638px;top:493px;font-size:12px;line-height:14px;color:#1a1a1a">Data To Report</div>
<div class="t" style="left:638px;top:518px;font-size:11.3px;line-height:14px;color:#222">Quiz Score</div>
<div class="t" style="left:700px;top:518px;font-size:12px;line-height:14px;color:#111;font-weight:bold">[</div>
<div class="rd on" style="left:709px;top:518px;"></div>
<div class="t" style="left:725px;top:518px;font-size:11.3px;line-height:14px;color:#222">Percentage</div>
<div class="rd" style="left:792px;top:518px;"></div>
<div class="t" style="left:808px;top:518px;font-size:11.3px;line-height:14px;color:#222">Points</div>
<div class="t" style="left:844px;top:518px;font-size:12px;line-height:14px;color:#111;font-weight:bold">]</div>
<div class="cb" style="left:639px;top:543px"></div><svg class="a" style="left:640px;top:541px" width="12" height="13" viewBox="0 0 12 13"><path d="M1.5 7 L4.5 11 L10.5 1.5" fill="none" stroke="#111" stroke-width="2"/></svg>
<div class="t" style="left:655px;top:542px;font-size:11.3px;line-height:14px;color:#222">Interaction Data</div>
<div class="t b" style="left:638px;top:568px;font-size:12px;line-height:14px;color:#1a1a1a">LMS Initialization Text:</div>
<div class="a" style="left:639px;top:590px;width:200px;height:19px;background:#fff;border:1px solid #9ca2b2"></div>
<div class="t" style="left:643px;top:592px;font-size:10.6px;line-height:14px;color:#222">Loading</div>
<div class="btn" style="left:641px;top:623px;width:70px;height:18px;line-height:16px;font-size:11.1px;">Advanced</div>
<div class="t" style="left:628px;top:661px;font-size:11.4px;line-height:14px;color:#222">Verified LMSs:</div>
<div class="t" style="left:706px;top:661px;font-size:11.5px;line-height:14px;color:#2f6fca;border-bottom:1px dotted #2f6fca;line-height:13px">[Click here to know more]</div>
<div class="t" style="left:628px;top:823px;font-size:11.3px;line-height:14px;color:#3474c4">Help...</div>
<div class="btn" style="left:935px;top:815px;width:92px;height:26px;line-height:24px;font-size:11.3px;border:2px solid #7f859a">OK</div>
<div class="btn" style="left:1038px;top:816px;width:90px;height:24px;line-height:22px;font-size:11.3px;">Cancel</div>
<div class="a" style="left:419px;top:154px;width:632px;height:554px;border:2px solid #f50a0a;box-shadow:3px 3px 4px rgba(0,0,0,.3), inset 3px 3px 4px rgba(0,0,0,.28)"></div>
<div class="t b" style="left:168px;top:1114px;width:1126px;text-align:center;font-size:9.5px;line-height:14px;color:#222">TIMELINE</div>
<!-- RIGHT PANEL -->
<div class="a" style="left:1295px;top:131px;width:301px;height:1003px;background:#eff0f5"></div>

<!-- RIGHT PANEL CONTENT -->
<div class="a" style="left:1595px;top:131px;width:1px;height:1003px;background:#8a8a8a"></div>
<div class="a" style="left:1305px;top:147px;width:24px;height:21px;background:#2a72c6"></div>
<div class="a" style="left:1309px;top:151px;width:16px;height:13px;background:#fff;border:1px dashed #1a3050"></div>
<div class="a" style="left:1339px;top:146px;width:206px;height:22px;background:#fff;border:1px solid #a9aebb"></div>
<svg class="a" style="left:1561px;top:150px" width="18" height="12" viewBox="0 0 18 12"><path d="M0.5 2.5 L3.5 2.5 L2 4.5Z" fill="#555"/><path d="M6 1.5h11M6 4.5h11M6 7.5h11M6 10.5h11" stroke="#555" stroke-width="1.2"/></svg>
<div class="t" style="left:1325px;top:191px;font-size:11.3px;line-height:14px;color:#222">Theme:</div>
<div class="dd" style="left:1371px;top:188px;width:148px;height:23px"><div class="t" style="left:6px;top:2.5px;font-size:11.3px;line-height:14px">Poise</div><div class="a" style="right:18px;top:2px;bottom:2px;width:1px;background:#e9ebf0"></div><div class="arr"></div></div>
<div class="t" style="left:1371px;width:148px;text-align:center;top:223px;font-size:11.3px;line-height:14px;color:#222">Master Slide</div>
<div class="a" style="left:1401px;top:244px;width:95px;height:71px;background:radial-gradient(ellipse 50% 52% at 50% 48%,#86b2ec 0%,#4f7fbf 35%,#1f4a78 70%,#0c2640 100%);border:1px solid #2a72c6"></div>
<div class="a" style="left:1503px;top:277px;width:0;height:0;border-left:5px solid transparent;border-right:5px solid transparent;border-top:7px solid #2a72c6"></div>
<div class="t b" style="left:1371px;width:148px;text-align:center;top:321px;font-size:11px;line-height:14px;color:#111">Blank</div>
<div class="btn" style="left:1371px;top:341px;width:148px;height:22px;line-height:20px;font-size:11.3px;">Reset Master Slide</div>
<div class="btn" style="left:1371px;top:372px;width:148px;height:22px;line-height:20px;font-size:11.3px;">Master slide view</div>
<div class="a" style="left:1295px;top:420px;width:300px;height:1px;background:#c2c6ce"></div>
<div class="a" style="left:1305px;top:407px;width:280px;height:27px;background:#d5dae7;border:1px solid #a8adba"></div>
<div class="a" style="left:1307px;top:410px;width:90px;height:21px;background:#4b5672"></div>
<div class="a" style="left:1491px;top:409px;width:1px;height:23px;background:#c0c5d2"></div>
<div class="a" style="left:1397px;top:409px;width:1px;height:23px;background:#c0c5d2"></div>
<div class="t" style="left:1307px;width:90px;text-align:center;top:412px;font-size:11.3px;line-height:14px;color:#f4f4f4">Style</div>
<div class="t" style="left:1397px;width:94px;text-align:center;top:414px;font-size:11.3px;line-height:14px;color:#222">Actions</div>
<div class="t" style="left:1491px;width:94px;text-align:center;top:414px;font-size:11.3px;line-height:14px;color:#222">Options</div>
<div class="cb" style="left:1303px;top:446px"></div><svg class="a" style="left:1304px;top:444px" width="12" height="13" viewBox="0 0 12 13"><path d="M1.5 7 L4.5 11 L10.5 1.5" fill="none" stroke="#111" stroke-width="2"/></svg>
<div class="t" style="left:1319px;top:445px;font-size:11.6px;line-height:14px;color:#222">Allow Gesture Navigation</div>
<div class="t" style="left:1306px;top:475px;font-size:11.3px;line-height:14px;color:#222">Background</div>
<div class="dd" style="left:1307px;top:496px;width:263px;height:23px"><div class="t" style="left:6px;top:2.5px;font-size:11.3px;line-height:14px">Project Background</div><div class="a" style="right:18px;top:2px;bottom:2px;width:1px;background:#e9ebf0"></div><div class="arr"></div></div>
<div class="btn" style="left:1308px;top:523px;width:196px;height:22px;line-height:20px;font-size:11.3px;">Add Project Background</div>
<svg class="a" style="left:1520px;top:527px" width="14" height="15" viewBox="0 0 14 15"><path d="M1 3h12M5 3V1.5h4V3" fill="none" stroke="#b3c3dd" stroke-width="1.6"/><path d="M2.5 5h9l-0.8 9h-7.4z" fill="#b3c3dd"/><path d="M5 6.5v6M7 6.5v6M9 6.5v6" stroke="#eff0f5" stroke-width="0.8"/></svg>
<svg class="a" style="left:1553px;top:526px" width="16" height="16" viewBox="0 0 16 16"><path d="M1 15 L2 11 L11 2 L14 5 L5 14Z" fill="#a9bfe2"/><path d="M11 2 L13 0.5 L15.5 3 L14 5Z" fill="#e9c46a"/></svg>
<div class="t" style="left:1304px;top:554px;font-size:11.3px;line-height:14px;color:#222">Quality</div>
<div class="dd" style="left:1305px;top:575px;width:267px;height:23px"><div class="t" style="left:7px;top:2.5px;font-size:11.3px;line-height:14px">Optimized</div><div class="a" style="right:18px;top:2px;bottom:2px;width:1px;background:#e9ebf0"></div><div class="arr"></div></div>
<div class="cb" style="left:1303px;top:609px"></div>
<div class="t" style="left:1319px;top:608px;font-size:11.5px;line-height:14px;color:#222">Master Slide Objects On Top</div>
<!-- STATUS BAR -->
<div class="a" style="left:0;top:1134px;width:1600px;height:24px;background:#22252e"></div>

<div class="t" style="left:10px;top:1139px;font-size:11.7px;line-height:14px;color:#f0f0f0">E:\Projects1\Ravi\Different Types of Publish Options.cptx</div>
<div class="a" style="left:1366px;top:1135px;width:1px;height:20px;background:#a0a0a0"></div>
<div class="t" style="left:1378px;top:1139px;font-size:11.3px;line-height:14px;color:#f0f0f0">Filmstrip View</div>
<div class="a" style="left:1469px;top:1135px;width:1px;height:20px;background:#a0a0a0"></div>
<div class="t" style="left:1475px;top:1139px;font-size:11.3px;line-height:14px;color:#f0f0f0">960 x 600</div>
<div class="a" style="left:1596px;top:38px;width:4px;height:1096px;background:#22252e"></div>
<div class="a" style="left:1599px;top:0;width:1px;height:1158px;background:#3c3f45"></div>
</body></html>
